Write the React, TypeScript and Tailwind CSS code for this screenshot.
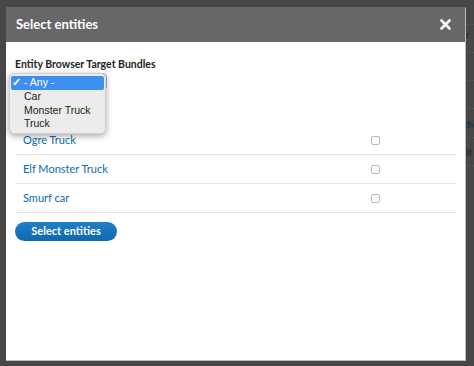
import React from "react";

const ROWS = ["Ogre Truck", "Elf Monster Truck", "Smurf car"];
const OPTIONS = ["Car", "Monster Truck", "Truck"];

function CloseIcon() {
  return (
    <svg width="11" height="11" viewBox="0 0 11 11" className="block">
      <path d="M1.5 1.5 L9.5 9.5 M9.5 1.5 L1.5 9.5" stroke="#fff" strokeWidth="2.6" strokeLinecap="round" />
    </svg>
  );
}

function SelectPopup() {
  return (
    <div className="absolute left-[-7px] top-[-1px] w-[97px] rounded-[5px] bg-[#ececec] py-[2px] shadow-[0_2px_6px_rgba(0,0,0,0.35)] border border-[#d0d0d0] text-[10.5px] leading-[13.5px] text-[#222] font-['Liberation_Sans',Arial,sans-serif]">
      <div className="mx-[1px] flex h-[14px] items-center rounded-[2px] bg-[#3d8ff0] text-white">
        <span className="w-[13px] pl-[1px] text-[11px] font-bold">✓</span>
        <span>- Any -</span>
      </div>
      {OPTIONS.map((o) => (
        <div key={o} className="pl-[14px] h-[13.5px]">
          {o}
        </div>
      ))}
    </div>
  );
}

export default function App() {
  return (
    <div className="relative h-[366px] w-[474px] overflow-hidden bg-[#474747] font-['Lato',sans-serif]">
      {/* dimmed page behind the dialog */}
      <div className="flex h-full">
        <div className="w-[5px] bg-[#3f3f3f]" />
        <div className="flex flex-1 flex-col pt-[24px] pl-[461px] text-[10px] font-bold leading-[12px] text-[#1c2f45]">
          <div className="h-[28px] border-t border-[#525252] pt-[3px] font-normal text-[#2a2a2a]">ar</div>
          <div className="h-[28px] border-t border-[#525252]" />
          <div className="h-[28px] border-t border-[#525252]" />
          <div className="h-[29px] border-t border-[#525252] pt-[9px]">RM</div>
          <div className="h-[28px] border-t border-[#525252] pt-[8px]">OI</div>
          <div className="h-[28px] border-t border-[#525252]" />
        </div>
      </div>

      <div className="absolute left-[6px] top-[7px] flex h-[354px] w-[460px] flex-col rounded-t-[2px] border-r border-b border-[#bdbdbd] bg-white">
        <div className="flex h-[35px] shrink-0 items-center justify-between bg-[#676767] pl-[10px] pr-[14px]">
          <span className="text-[13px] font-bold text-white">Select entities</span>
          <CloseIcon />
        </div>

        <div className="flex flex-col px-[9px] pt-[15px]">
          <label className="text-[10.5px] font-bold leading-[14px] text-[#222]">Entity Browser Target Bundles</label>
          <div className="relative mt-[2px] h-[17px] w-[92px] rounded-[4px] border border-[#8fb7e8] bg-white">
            <SelectPopup />
          </div>

          <div className="mt-[36px] flex flex-col">
            {ROWS.map((r) => (
              <div key={r} className="flex h-[29px] items-center border-b border-[#e3e3e3] pl-[8px]">
                <span className="flex-1 text-[11px] text-[#0a6aaf]">{r}</span>
                <span className="mr-[76px] h-[9px] w-[9px] rounded-[2px] border border-[#b9b9b9] bg-white" />
              </div>
            ))}
          </div>

          <div className="mt-[9px] flex">
            <button className="h-[19px] w-[102px] rounded-full bg-gradient-to-b from-[#1f80c8] to-[#1168ad] text-[11px] font-bold text-white">
              Select entities
            </button>
          </div>
        </div>
      </div>
    </div>
  );
}
